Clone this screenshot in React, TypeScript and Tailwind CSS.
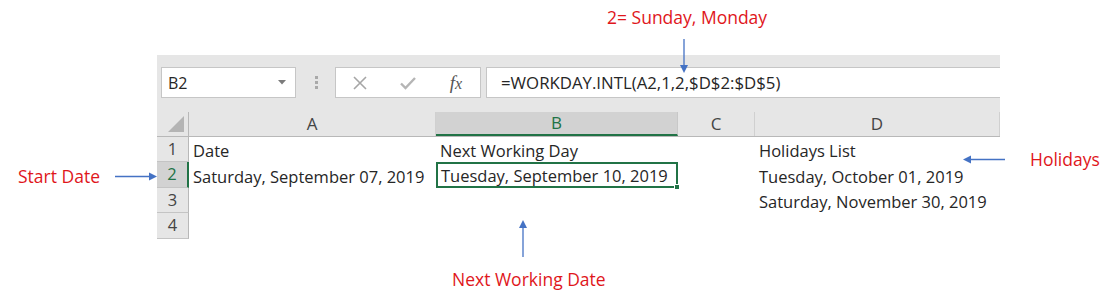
import React from "react";

const BLUE = "#4472c4";

function Arrow({ x1, y1, x2, y2 }: { x1: number; y1: number; x2: number; y2: number }) {
  const dx = x2 - x1;
  const dy = y2 - y1;
  const len = Math.sqrt(dx * dx + dy * dy);
  const ux = dx / len;
  const uy = dy / len;
  const hl = 8;
  const hw = 4;
  const bx = x2 - ux * hl;
  const by = y2 - uy * hl;
  const px = -uy * hw;
  const py = ux * hw;
  return (
    <g>
      <line x1={x1} y1={y1} x2={bx} y2={by} stroke={BLUE} strokeWidth={1.3} />
      <polygon points={`${x2},${y2} ${bx + px},${by + py} ${bx - px},${by - py}`} fill={BLUE} />
    </g>
  );
}

const cols = [
  { l: "A", w: 247 },
  { l: "B", w: 242 },
  { l: "C", w: 77 },
  { l: "D", w: 245 },
];

const rows: { n: number; h: number; cells: string[] }[] = [
  { n: 1, h: 25, cells: ["Date", "Next Working Day", "", "Holidays List"] },
  { n: 2, h: 26, cells: ["Saturday, September 07, 2019", "Tuesday, September 10, 2019", "", "Tuesday, October 01, 2019"] },
  { n: 3, h: 25, cells: ["", "", "", "Saturday, November 30, 2019"] },
  { n: 4, h: 26, cells: ["", "", "", ""] },
];

export default function App() {
  return (
    <div className="relative w-[1111px] h-[293px] bg-white overflow-hidden font-['Open_Sans',sans-serif] text-[#1f1f1f]">
      <div className="pt-[55px] pl-[157px]">
        <div className="w-[843px]">
          {/* Toolbar */}
          <div className="h-[57px] bg-[#e6e6e6] flex items-start pt-[12px]">
            <div className="ml-[4px] w-[135px] h-[31px] bg-white border border-[#c6c6c6] flex items-center justify-between pl-[6px] pr-[9px]">
              <span className="text-[16px] text-[#262626]">B2</span>
              <svg width="8" height="5" viewBox="0 0 8 5">
                <polygon points="0,0 8,0 4,4.5" fill="#7b7b7b" />
              </svg>
            </div>
            <div className="ml-[19px] w-[3px] h-[31px] flex flex-col items-center justify-center gap-[2px]">
              <div className="w-[3px] h-[3px] bg-[#a9a9a9]" />
              <div className="w-[3px] h-[3px] bg-[#a9a9a9]" />
              <div className="w-[3px] h-[3px] bg-[#a9a9a9]" />
            </div>
            <div className="ml-[17px] w-[146px] h-[31px] bg-white border border-[#c6c6c6] flex items-center">
              <div className="w-[48px] flex justify-center">
                <svg width="14" height="14" viewBox="0 0 14 14">
                  <path d="M1 1 L13 13 M13 1 L1 13" stroke="#a6a6a6" strokeWidth="1.6" fill="none" />
                </svg>
              </div>
              <div className="w-[48px] flex justify-center">
                <svg width="16" height="14" viewBox="0 0 16 14">
                  <path d="M1 7.5 L5.5 12 L15 2" stroke="#b5b5b5" strokeWidth="2.4" fill="none" />
                </svg>
              </div>
              <div className="w-[48px] flex justify-center">
                <span className="font-['Liberation_Serif',serif] italic text-[19px] text-[#555] leading-none">
                  f<span className="text-[16px]">x</span>
                </span>
              </div>
            </div>
            <div className="ml-[5px] flex-1 h-[31px] bg-white border border-r-0 border-[#c6c6c6] flex items-center pl-[14px]">
              <span className="text-[16.8px] text-[#262626]">=WORKDAY.INTL(A2,1,2,$D$2:$D$5)</span>
            </div>
          </div>

          {/* Column headers */}
          <div className="flex h-[25px] bg-[#e6e6e6] border-b border-[#b8b8b8]">
            <div className="w-[32px] h-full border-r border-[#b8b8b8] flex items-end justify-end pr-[4px] pb-[4px]">
              <svg width="16" height="16" viewBox="0 0 16 16">
                <polygon points="16,0 16,16 0,16" fill="#b4b4b4" />
              </svg>
            </div>
            {cols.map((c) => (
              <div
                key={c.l}
                style={{ width: c.w }}
                className={
                  c.l === "B"
                    ? "h-full bg-[#d2d2d2] border-r border-[#c8c8c8] border-b-2 border-b-[#217346] flex items-center justify-center text-[17px] text-[#217346]"
                    : "h-full border-r border-[#d0d0d0] flex items-center justify-center text-[17px] text-[#444]"
                }
              >
                {c.l}
              </div>
            ))}
          </div>

          {/* Rows */}
          {rows.map((r) => (
            <div key={r.n} className="flex" style={{ height: r.h }}>
              <div
                className={
                  r.n === 2
                    ? "w-[32px] h-full bg-[#d2d2d2] border-b border-[#c4c4c4] border-r-2 border-r-[#217346] flex items-center justify-center text-[16.5px] text-[#217346]"
                    : "w-[32px] h-full bg-[#e6e6e6] border-b border-[#c4c4c4] border-r border-r-[#b8b8b8] flex items-center justify-center text-[16.5px] text-[#444]"
                }
              >
                {r.n}
              </div>
              {cols.map((c, i) => {
                const selected = r.n === 2 && c.l === "B";
                return (
                  <div
                    key={c.l}
                    style={{ width: c.w }}
                    className={
                      selected
                        ? "relative h-full border-2 border-[#217346] flex items-center pt-[2px] pl-[3px] text-[16.5px] text-[#262626] whitespace-nowrap"
                        : "h-full flex items-center pt-[4px] pl-[4px] text-[16.5px] text-[#262626] whitespace-nowrap"
                    }
                  >
                    {r.cells[i]}
                    {selected && (
                      <div className="absolute right-[-4px] bottom-[-4px] w-[6px] h-[6px] bg-[#217346] border border-white" />
                    )}
                  </div>
                );
              })}
            </div>
          ))}
        </div>
      </div>

      {/* Callout labels */}
      <div className="absolute left-[607px] top-[4px] text-[17.5px] text-[#e0161b] whitespace-nowrap">2= Sunday, Monday</div>
      <div className="absolute left-[18px] top-[163px] text-[17.5px] text-[#e0161b] whitespace-nowrap">Start Date</div>
      <div className="absolute left-[1030px] top-[146px] text-[17.5px] text-[#e0161b] whitespace-nowrap">Holidays</div>
      <div className="absolute left-[452px] top-[266px] text-[17.5px] text-[#e0161b] whitespace-nowrap">Next Working Date</div>

      {/* Callout arrows */}
      <svg className="absolute left-0 top-0 pointer-events-none" width="1111" height="293">
        <Arrow x1={684} y1={39} x2={684} y2={73} />
        <Arrow x1={115} y1={176.5} x2={157} y2={176.5} />
        <Arrow x1={1005} y1={159.5} x2={963} y2={159.5} />
        <Arrow x1={523} y1={257} x2={523} y2={220} />
      </svg>
    </div>
  );
}
